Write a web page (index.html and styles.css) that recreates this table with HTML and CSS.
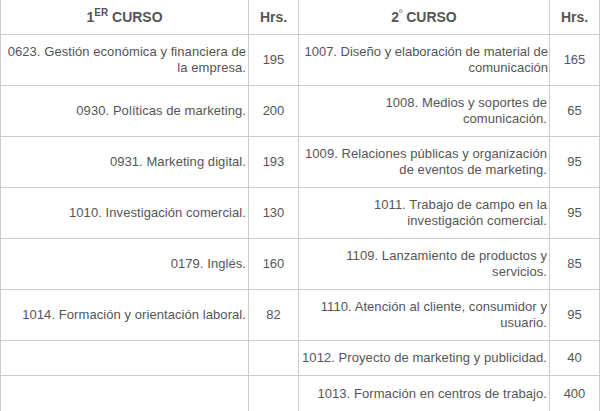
FILE: index.html
```html
<!DOCTYPE html>
<html lang="es">
<head>
<meta charset="utf-8">
<title>Módulos</title>
<link rel="stylesheet" href="styles.css">
</head>
<body>
<table class="plan">
  <colgroup>
    <col class="c-mod">
    <col class="c-hrs">
    <col class="c-mod2">
    <col class="c-hrs">
  </colgroup>
  <thead>
    <tr>
      <th>1<sup>ER</sup> CURSO</th>
      <th>Hrs.</th>
      <th>2<sup class="deg">º</sup> CURSO</th>
      <th>Hrs.</th>
    </tr>
  </thead>
  <tbody>
    <tr>
      <td class="mod">0623. Gestión económica y financiera de la empresa.</td>
      <td class="hrs">195</td>
      <td class="mod tight">1007. Diseño y elaboración de material de comunicación</td>
      <td class="hrs">165</td>
    </tr>
    <tr>
      <td class="mod">0930. Políticas de marketing.</td>
      <td class="hrs">200</td>
      <td class="mod">1008. Medios y soportes de comunicación.</td>
      <td class="hrs">65</td>
    </tr>
    <tr>
      <td class="mod">0931. Marketing digital.</td>
      <td class="hrs">193</td>
      <td class="mod">1009. Relaciones públicas y organización de eventos de marketing.</td>
      <td class="hrs">95</td>
    </tr>
    <tr>
      <td class="mod">1010. Investigación comercial.</td>
      <td class="hrs">130</td>
      <td class="mod">1011. Trabajo de campo en la investigación comercial.</td>
      <td class="hrs">95</td>
    </tr>
    <tr>
      <td class="mod">0179. Inglés.</td>
      <td class="hrs">160</td>
      <td class="mod">1109. Lanzamiento de productos y servicios.</td>
      <td class="hrs">85</td>
    </tr>
    <tr>
      <td class="mod">1014. Formación y orientación laboral.</td>
      <td class="hrs">82</td>
      <td class="mod">1110. Atención al cliente, consumidor y usuario.</td>
      <td class="hrs">95</td>
    </tr>
    <tr>
      <td class="mod"></td>
      <td class="hrs"></td>
      <td class="mod">1012. Proyecto de marketing y publicidad.</td>
      <td class="hrs">40</td>
    </tr>
    <tr class="last">
      <td class="mod"></td>
      <td class="hrs"></td>
      <td class="mod">1013. Formación en centros de trabajo.</td>
      <td class="hrs">400</td>
    </tr>
  </tbody>
</table>
</body>
</html>
```

FILE: styles.css
```css
html, body {
  margin: 0;
  padding: 0;
  background: #ffffff;
}

body {
  font-family: "Liberation Sans", Arial, sans-serif;
  font-size: 13px;
  color: #555555;
}

.plan {
  border-collapse: collapse;
  table-layout: fixed;
  width: 600px;
}

.c-mod { width: 248px; }
.c-mod2 { width: 251px; }
.c-hrs { width: 50px; }

.plan th,
.plan td {
  border: 1px solid #cccccc;
  line-height: 16px;
  padding: 9px 2px;
  vertical-align: middle;
}

.plan thead th {
  border-top: none;
  font-size: 14px;
  font-weight: bold;
  text-align: center;
  color: #555555;
}

.plan thead sup {
  font-size: 10px;
  line-height: 0;
  vertical-align: 6px;
}

.plan thead sup.deg {
  font-size: 9px;
  font-weight: normal;
}

.plan td.mod {
  text-align: right;
  letter-spacing: 0.07px;
}

.plan td.mod.tight {
  letter-spacing: 0;
  padding-left: 1px;
  padding-right: 1px;
}

.plan td.hrs {
  text-align: center;
}

.plan tr.last td {
  border-bottom: none;
  padding-top: 10px;
  padding-bottom: 10px;
}
```
